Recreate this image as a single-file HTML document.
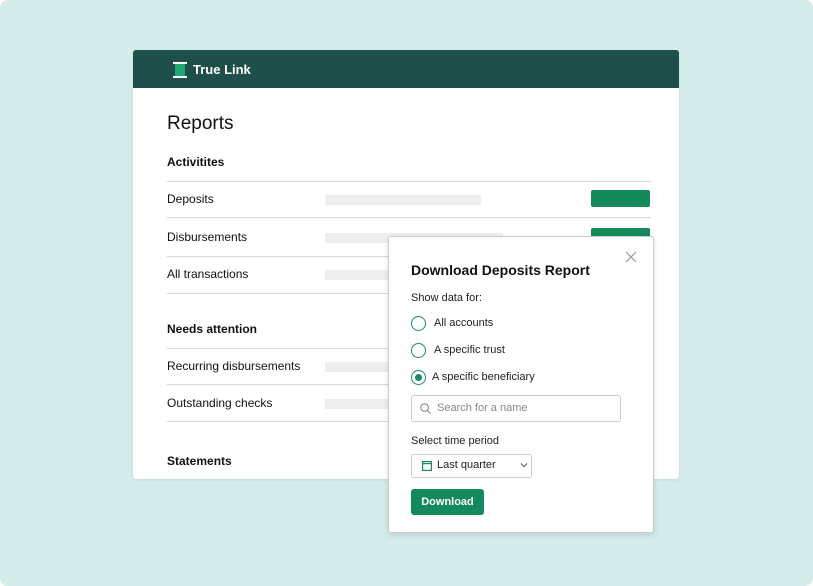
<!DOCTYPE html>
<html><head><style>
*{box-sizing:border-box;margin:0;padding:0}
html{background:#fff}
body{width:813px;height:586px;background:#d4ecea;font-family:"Liberation Sans",sans-serif;position:relative;overflow:hidden;color:#111;border-radius:8px}
.card{position:absolute;left:133px;top:50px;width:546px;height:429px;background:#fff;border-radius:3px;overflow:hidden;box-shadow:0 1px 3px rgba(0,0,0,.08)}
.hdr{height:38px;background:#1f4f4a;position:relative}
.logo{position:absolute;left:40px;top:12px}
.brand{position:absolute;left:60px;top:12px;color:#fff;font-weight:bold;font-size:13px}
.t{position:absolute;font-size:12px}
.line{position:absolute;left:34px;width:484px;height:1px;background:#d6d6d6}
.bar{position:absolute;height:10px;background:#eeeeee}
.btn{position:absolute;left:458px;width:59px;height:17px;background:#148a5c;border-radius:2px}
.pop{position:absolute;left:388px;top:236px;width:266px;height:297px;background:#fff;border:1px solid #ccc;border-radius:3px;box-shadow:0 2px 6px rgba(0,0,0,.12)}
.p{position:absolute;font-size:11px;color:#222}
.radio{position:absolute;left:22px;width:15px;height:15px;border:1.3px solid #1e8a64;border-radius:50%}
</style></head><body>
<div class="card">
<div class="hdr">
<svg class="logo" width="14" height="16" viewBox="0 0 14 16"><rect x="0" y="0" width="14" height="2" fill="#fff"/><rect x="2" y="2" width="10" height="12" fill="#1ea86d"/><rect x="0" y="14" width="14" height="2" fill="#fff"/></svg>
<div class="brand">True Link</div>
</div>
<div class="t" style="left:34px;top:63px;font-size:19px">Reports</div>
<div class="t" style="left:34px;top:105px;font-weight:bold">Activitites</div>
<div class="line" style="top:131px"></div>
<div class="t" style="left:34px;top:142px">Deposits</div>
<div class="bar" style="left:192px;top:145px;width:156px"></div>
<div class="btn" style="top:140px"></div>
<div class="line" style="top:167px"></div>
<div class="t" style="left:34px;top:180px">Disbursements</div>
<div class="bar" style="left:192px;top:183px;width:178px"></div>
<div class="btn" style="top:178px"></div>
<div class="line" style="top:206px"></div>
<div class="t" style="left:34px;top:217px">All transactions</div>
<div class="bar" style="left:192px;top:220px;width:80px"></div>
<div class="line" style="top:243px"></div>
<div class="t" style="left:34px;top:272px;font-weight:bold">Needs attention</div>
<div class="line" style="top:298px"></div>
<div class="t" style="left:34px;top:309px">Recurring disbursements</div>
<div class="bar" style="left:192px;top:312px;width:80px"></div>
<div class="line" style="top:334px"></div>
<div class="t" style="left:34px;top:346px">Outstanding checks</div>
<div class="bar" style="left:192px;top:349px;width:80px"></div>
<div class="line" style="top:371px"></div>
<div class="t" style="left:34px;top:404px;font-weight:bold">Statements</div>
</div>
<div class="pop">
<svg style="position:absolute;left:236px;top:14px" width="12" height="12" viewBox="0 0 12 12"><path d="M1 1L11 11M11 1L1 11" stroke="#999" stroke-width="1.2"/></svg>
<div class="p" style="left:22px;top:25px;font-size:14px;font-weight:bold;color:#111">Download Deposits Report</div>
<div class="p" style="left:22px;top:55px">Show data for:</div>
<div class="radio" style="top:79px"></div><div class="p" style="left:45px;top:80px">All accounts</div>
<div class="radio" style="top:106px"></div><div class="p" style="left:45px;top:107px">A specific trust</div>
<div class="radio" style="top:133px"><div style="position:absolute;left:3px;top:3px;width:7px;height:7px;border-radius:50%;background:#1e8a64"></div></div><div class="p" style="left:43px;top:134px">A specific beneficiary</div>
<div style="position:absolute;left:22px;top:158px;width:210px;height:27px;border:1px solid #ccc;border-radius:3px"></div>
<svg style="position:absolute;left:31px;top:166px" width="11" height="11" viewBox="0 0 11 11"><circle cx="4.6" cy="4.6" r="3.8" fill="none" stroke="#888" stroke-width="1.1"/><path d="M7.4 7.4L10.5 10.5" stroke="#888" stroke-width="1.1"/></svg>
<div class="p" style="left:48px;top:165px;color:#888">Search for a name</div>
<div class="p" style="left:22px;top:198px">Select time period</div>
<div style="position:absolute;left:22px;top:217px;width:121px;height:24px;border:1px solid #ccc;border-radius:3px"></div>
<svg style="position:absolute;left:33px;top:223px" width="10" height="11" viewBox="0 0 10 11"><rect x="0.6" y="1.6" width="8.8" height="8.8" fill="none" stroke="#1e8a64" stroke-width="1.2"/><path d="M0.6 3.6H9.4" stroke="#1e8a64" stroke-width="1.2"/></svg>
<div class="p" style="left:48px;top:222px">Last quarter</div>
<svg style="position:absolute;left:131px;top:225px" width="8" height="6" viewBox="0 0 8 6"><path d="M1 1.5L4 4.5L7 1.5" fill="none" stroke="#555" stroke-width="1"/></svg>
<div style="position:absolute;left:22px;top:252px;width:73px;height:26px;background:#148a5c;border-radius:3px;color:#fff;font-size:11px;font-weight:bold;text-align:center;line-height:26px">Download</div>
</div>
</body></html>
